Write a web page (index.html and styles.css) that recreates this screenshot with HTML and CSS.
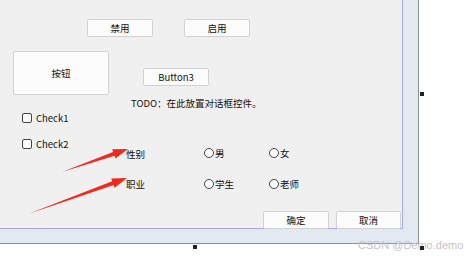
FILE: index.html
```html
<!DOCTYPE html>
<html lang="zh-CN">
<head>
    <meta charset="UTF-8">
    <meta name="viewport" content="width=device-width, initial-scale=1.0">
    <title>对话框设计</title>
    <link rel="stylesheet" href="styles.css">
</head>
<body>
    <div class="page">
        <div class="frame">
            <div class="dialog">
                <div class="top-row">
                    <button class="btn">禁用</button>
                    <button class="btn">启用</button>
                </div>

                <div class="main-row">
                    <button class="btn btn-big">按钮</button>
                    <button class="btn btn-three">Button3</button>
                </div>

                <p class="hint">TODO：在此放置对话框控件。</p>

                <label class="check check-first"><span class="box"></span>Check1</label>
                <label class="check check-second"><span class="box"></span>Check2</label>

                <div class="field field-sex">
                    <span class="field-label">性别</span>
                    <span class="option"><span class="radio"></span>男</span>
                    <span class="option"><span class="radio"></span>女</span>
                </div>

                <div class="field field-job">
                    <span class="field-label">职业</span>
                    <span class="option"><span class="radio"></span>学生</span>
                    <span class="option"><span class="radio"></span>老师</span>
                </div>

                <div class="footer-row">
                    <button class="btn">确定</button>
                    <button class="btn btn-cancel">取消</button>
                </div>
            </div>
        </div>

        <!-- annotation arrows drawn over the screenshot -->
        <svg class="arrows" width="474" height="257" viewBox="0 0 474 257">
            <polygon fill="#ee2a1e" points="62,172 114.5,155.8 115.4,158.6 128,149 112.2,149.2 113.1,152 62,172"/>
            <polygon fill="#ee2a1e" points="28,214 113.6,185 114.6,187.8 127,178 111.2,178.4 112.2,181.2 28,214"/>
        </svg>

        <span class="watermark">CSDN @Demo.demo</span>

        <span class="handle handle-right"></span>
        <span class="handle handle-bottom"></span>
        <span class="handle handle-corner"></span>
    </div>
</body>
</html>
```

FILE: styles.css
```css
/* General Styles */
body {
    margin: 0;
    padding: 0;
    background-color: #fff;
    font-family: "Noto Sans CJK SC", "Noto Sans", sans-serif;
    font-size: 9.5px;
    color: #111;
}

.page {
    position: relative;
    width: 474px;
    height: 257px;
    overflow: hidden;
}

/* editor frame round the dialog */
.frame {
    width: 418px;
    height: 243px;
    background-color: #e2e9f1;
    border-right: 1px solid #8d9197;
    border-bottom: 1px solid #8d9197;
}

.dialog {
    width: 402px;
    height: 209px;
    padding-top: 19px;
    background-color: #f0f0f0;
    border-right: 1px solid #aba7f2;
    border-bottom: 1px solid #aba7f2;
}

.btn {
    box-sizing: border-box;
    width: 66px;
    height: 18px;
    padding: 0;
    font-family: inherit;
    font-size: 9.5px;
    color: #111;
    background-color: #fcfcfc;
    border: 1px solid #d2d2d2;
    border-radius: 2px;
    line-height: 16px;
}

.top-row {
    display: flex;
    gap: 31px;
    padding-left: 87px;
}

.main-row {
    display: flex;
    align-items: flex-start;
    margin-top: 14px;
    padding-left: 13px;
}

.btn-big {
    width: 96px;
    height: 44px;
}

.btn-three {
    margin-top: 17px;
    margin-left: 34px;
}

.hint {
    margin: 2px 0 0;
    padding-left: 131px;
    line-height: 12px;
}

/* check boxes */
.check {
    display: flex;
    align-items: center;
    height: 12px;
    padding-left: 22px;
}

.check-first {
    margin-top: 3px;
}

.check-second {
    margin-top: 14px;
    height: 11px;
}

.box {
    box-sizing: border-box;
    width: 10px;
    height: 10px;
    margin-right: 4px;
    background-color: #fff;
    border: 1px solid #444;
    border-radius: 2px;
}

/* radio rows */
.field {
    display: grid;
    grid-template-columns: 78px 65px auto;
    align-items: center;
    height: 11px;
    padding-left: 126px;
}

.field-sex {
    margin-top: -2px;
    height: 12px;
}

.field-job {
    margin-top: 18px;
}

.option {
    display: flex;
    align-items: center;
}

.field-sex .option {
    margin-top: -3px;
}

.radio {
    box-sizing: border-box;
    width: 10px;
    height: 10px;
    margin-right: 1px;
    background-color: #fff;
    border: 1px solid #444;
    border-radius: 50%;
}

.footer-row {
    display: flex;
    gap: 7px;
    margin-top: 23px;
    padding-left: 263px;
}

.btn-cancel {
    width: 65px;
}

/* overlays */
.arrows {
    position: absolute;
    left: 0;
    top: 0;
    pointer-events: none;
}

.handle {
    position: absolute;
    width: 4px;
    height: 4px;
    background-color: #222;
}

.handle-right {
    left: 420px;
    top: 92px;
}

.handle-bottom {
    left: 193px;
    top: 245px;
}

.handle-corner {
    left: 420px;
    top: 246px;
}

.watermark {
    position: absolute;
    left: 358px;
    top: 238px;
    font-family: "Liberation Sans", Arial, sans-serif;
    font-size: 11px;
    line-height: 14px;
    white-space: nowrap;
    color: #c4c4c4;
}
```
